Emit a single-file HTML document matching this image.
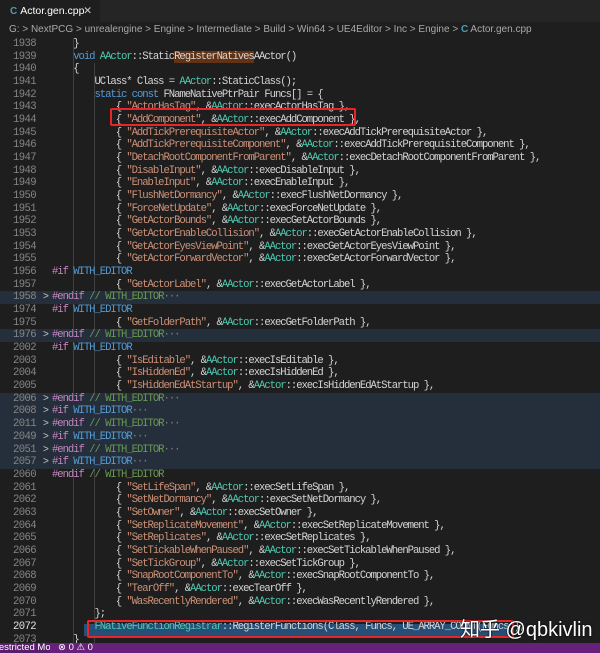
<!DOCTYPE html>
<html><head><meta charset="utf-8">
<style>
*{margin:0;padding:0;box-sizing:border-box}
html,body{width:600px;height:653px;overflow:hidden;background:#1e1e1e}
body{position:relative;font-family:"Liberation Sans",sans-serif}
#tabs{position:absolute;left:0;top:0;width:600px;height:22px;background:#252526}
#tab{position:absolute;left:0;top:0;width:100px;height:22px;background:#1e1e1e;color:#fff;font-size:10.5px;line-height:22px;padding-left:10px}
#tab .ic{color:#519aba;font-weight:bold;margin-right:3px;font-size:10px}
#tab .x{position:absolute;right:8px;color:#ccc}
#crumb{position:absolute;left:0;top:22px;width:600px;height:15px;background:#1e1e1e;color:#a9a9a9;font-size:10px;line-height:15px;padding-left:9px;white-space:nowrap}
#code{position:absolute;left:0;top:38px;width:600px}
.r{position:relative;height:12.68px;line-height:12.68px;font-family:"Liberation Mono",monospace;font-size:10.6px;letter-spacing:-1.05px;white-space:pre;color:#d4d4d4}
.r.fd{background:#252f3b}
.n{position:absolute;left:0;width:36px;text-align:right;color:#858585;letter-spacing:-0.6px}
.cur .n{color:#e0e0e0}
.a{position:absolute;left:43px;color:#c5c5c5;font-family:"Liberation Sans",sans-serif;font-size:10px;letter-spacing:0}
.t{position:absolute;left:52px}
.k{color:#569cd6}.ty{color:#4ec9b0}.s{color:#ce9178}.p{color:#c586c0}.m{color:#569cd6}.c{color:#6a9955}.f{color:#dcdcaa}.d{color:#808080}
.g{position:absolute;top:38px;width:1px;background:#404040}
.box{position:absolute;border:2px solid #e8262a;border-radius:2px}
#sel{position:absolute;left:84px;top:624px;width:425px;height:12px;background:#264f78}
#wm{position:absolute;left:460px;top:613px;color:#fff;font-size:20px;font-family:"Liberation Sans","Noto Sans CJK SC",sans-serif;text-shadow:0 0 2px #000}
#sb{position:absolute;left:0;top:643px;width:600px;height:10px;background:#68217a;color:#fff;font-size:9.5px;line-height:10px;white-space:nowrap}
#sb .l{display:inline-block;background:#5a1d6b;width:50px;overflow:hidden;text-indent:-8px;vertical-align:top}
</style></head><body>
<div id="tabs"><div id="tab"><span class="ic">C</span>Actor.gen.cpp<span class="x">✕</span></div></div>
<div id="crumb">G: &gt; NextPCG &gt; unrealengine &gt; Engine &gt; Intermediate &gt; Build &gt; Win64 &gt; UE4Editor &gt; Inc &gt; Engine &gt; <span style="color:#519aba;font-weight:bold">C</span> Actor.gen.cpp</div>
<div class="g" style="left:73px;height:605px"></div>
<div class="g" style="left:94px;height:580px;top:63px"></div>
<div id="sel"></div>
<div id="code">
<div class="r"><span class="n">1938</span><span class="t">    }</span></div>
<div class="r"><span class="n">1939</span><span class="t">    <span class="k">void</span> <span class="ty">AActor</span>::Static<span style="background:#613214">RegisterNatives</span>AActor()</span></div>
<div class="r"><span class="n">1940</span><span class="t">    {</span></div>
<div class="r"><span class="n">1941</span><span class="t">        UClass* Class = <span class="ty">AActor</span>::StaticClass();</span></div>
<div class="r"><span class="n">1942</span><span class="t">        <span class="k">static</span> <span class="k">const</span> FNameNativePtrPair Funcs[] = {</span></div>
<div class="r"><span class="n">1943</span><span class="t">            { <span class="s">"ActorHasTag"</span>, &amp;<span class="ty">AActor</span>::execActorHasTag },</span></div>
<div class="r"><span class="n">1944</span><span class="t">            { <span class="s">"AddComponent"</span>, &amp;<span class="ty">AActor</span>::execAddComponent },</span></div>
<div class="r"><span class="n">1945</span><span class="t">            { <span class="s">"AddTickPrerequisiteActor"</span>, &amp;<span class="ty">AActor</span>::execAddTickPrerequisiteActor },</span></div>
<div class="r"><span class="n">1946</span><span class="t">            { <span class="s">"AddTickPrerequisiteComponent"</span>, &amp;<span class="ty">AActor</span>::execAddTickPrerequisiteComponent },</span></div>
<div class="r"><span class="n">1947</span><span class="t">            { <span class="s">"DetachRootComponentFromParent"</span>, &amp;<span class="ty">AActor</span>::execDetachRootComponentFromParent },</span></div>
<div class="r"><span class="n">1948</span><span class="t">            { <span class="s">"DisableInput"</span>, &amp;<span class="ty">AActor</span>::execDisableInput },</span></div>
<div class="r"><span class="n">1949</span><span class="t">            { <span class="s">"EnableInput"</span>, &amp;<span class="ty">AActor</span>::execEnableInput },</span></div>
<div class="r"><span class="n">1950</span><span class="t">            { <span class="s">"FlushNetDormancy"</span>, &amp;<span class="ty">AActor</span>::execFlushNetDormancy },</span></div>
<div class="r"><span class="n">1951</span><span class="t">            { <span class="s">"ForceNetUpdate"</span>, &amp;<span class="ty">AActor</span>::execForceNetUpdate },</span></div>
<div class="r"><span class="n">1952</span><span class="t">            { <span class="s">"GetActorBounds"</span>, &amp;<span class="ty">AActor</span>::execGetActorBounds },</span></div>
<div class="r"><span class="n">1953</span><span class="t">            { <span class="s">"GetActorEnableCollision"</span>, &amp;<span class="ty">AActor</span>::execGetActorEnableCollision },</span></div>
<div class="r"><span class="n">1954</span><span class="t">            { <span class="s">"GetActorEyesViewPoint"</span>, &amp;<span class="ty">AActor</span>::execGetActorEyesViewPoint },</span></div>
<div class="r"><span class="n">1955</span><span class="t">            { <span class="s">"GetActorForwardVector"</span>, &amp;<span class="ty">AActor</span>::execGetActorForwardVector },</span></div>
<div class="r"><span class="n">1956</span><span class="t"><span class="p">#if</span> <span class="m">WITH_EDITOR</span></span></div>
<div class="r"><span class="n">1957</span><span class="t">            { <span class="s">"GetActorLabel"</span>, &amp;<span class="ty">AActor</span>::execGetActorLabel },</span></div>
<div class="r fd"><span class="n">1958</span><span class="a">&gt;</span><span class="t"><span class="p">#endif</span> <span class="c">// WITH_EDITOR</span><span class="d">···</span></span></div>
<div class="r"><span class="n">1974</span><span class="t"><span class="p">#if</span> <span class="m">WITH_EDITOR</span></span></div>
<div class="r"><span class="n">1975</span><span class="t">            { <span class="s">"GetFolderPath"</span>, &amp;<span class="ty">AActor</span>::execGetFolderPath },</span></div>
<div class="r fd"><span class="n">1976</span><span class="a">&gt;</span><span class="t"><span class="p">#endif</span> <span class="c">// WITH_EDITOR</span><span class="d">···</span></span></div>
<div class="r"><span class="n">2002</span><span class="t"><span class="p">#if</span> <span class="m">WITH_EDITOR</span></span></div>
<div class="r"><span class="n">2003</span><span class="t">            { <span class="s">"IsEditable"</span>, &amp;<span class="ty">AActor</span>::execIsEditable },</span></div>
<div class="r"><span class="n">2004</span><span class="t">            { <span class="s">"IsHiddenEd"</span>, &amp;<span class="ty">AActor</span>::execIsHiddenEd },</span></div>
<div class="r"><span class="n">2005</span><span class="t">            { <span class="s">"IsHiddenEdAtStartup"</span>, &amp;<span class="ty">AActor</span>::execIsHiddenEdAtStartup },</span></div>
<div class="r fd"><span class="n">2006</span><span class="a">&gt;</span><span class="t"><span class="p">#endif</span> <span class="c">// WITH_EDITOR</span><span class="d">···</span></span></div>
<div class="r fd"><span class="n">2008</span><span class="a">&gt;</span><span class="t"><span class="p">#if</span> <span class="m">WITH_EDITOR</span><span class="d">···</span></span></div>
<div class="r fd"><span class="n">2011</span><span class="a">&gt;</span><span class="t"><span class="p">#endif</span> <span class="c">// WITH_EDITOR</span><span class="d">···</span></span></div>
<div class="r fd"><span class="n">2049</span><span class="a">&gt;</span><span class="t"><span class="p">#if</span> <span class="m">WITH_EDITOR</span><span class="d">···</span></span></div>
<div class="r fd"><span class="n">2051</span><span class="a">&gt;</span><span class="t"><span class="p">#endif</span> <span class="c">// WITH_EDITOR</span><span class="d">···</span></span></div>
<div class="r fd"><span class="n">2057</span><span class="a">&gt;</span><span class="t"><span class="p">#if</span> <span class="m">WITH_EDITOR</span><span class="d">···</span></span></div>
<div class="r"><span class="n">2060</span><span class="t"><span class="p">#endif</span> <span class="c">// WITH_EDITOR</span></span></div>
<div class="r"><span class="n">2061</span><span class="t">            { <span class="s">"SetLifeSpan"</span>, &amp;<span class="ty">AActor</span>::execSetLifeSpan },</span></div>
<div class="r"><span class="n">2062</span><span class="t">            { <span class="s">"SetNetDormancy"</span>, &amp;<span class="ty">AActor</span>::execSetNetDormancy },</span></div>
<div class="r"><span class="n">2063</span><span class="t">            { <span class="s">"SetOwner"</span>, &amp;<span class="ty">AActor</span>::execSetOwner },</span></div>
<div class="r"><span class="n">2064</span><span class="t">            { <span class="s">"SetReplicateMovement"</span>, &amp;<span class="ty">AActor</span>::execSetReplicateMovement },</span></div>
<div class="r"><span class="n">2065</span><span class="t">            { <span class="s">"SetReplicates"</span>, &amp;<span class="ty">AActor</span>::execSetReplicates },</span></div>
<div class="r"><span class="n">2066</span><span class="t">            { <span class="s">"SetTickableWhenPaused"</span>, &amp;<span class="ty">AActor</span>::execSetTickableWhenPaused },</span></div>
<div class="r"><span class="n">2067</span><span class="t">            { <span class="s">"SetTickGroup"</span>, &amp;<span class="ty">AActor</span>::execSetTickGroup },</span></div>
<div class="r"><span class="n">2068</span><span class="t">            { <span class="s">"SnapRootComponentTo"</span>, &amp;<span class="ty">AActor</span>::execSnapRootComponentTo },</span></div>
<div class="r"><span class="n">2069</span><span class="t">            { <span class="s">"TearOff"</span>, &amp;<span class="ty">AActor</span>::execTearOff },</span></div>
<div class="r"><span class="n">2070</span><span class="t">            { <span class="s">"WasRecentlyRendered"</span>, &amp;<span class="ty">AActor</span>::execWasRecentlyRendered },</span></div>
<div class="r"><span class="n">2071</span><span class="t">        };</span></div>
<div class="r cur"><span class="n">2072</span><span class="t">        <span class="ty">FNativeFunctionRegistrar</span>::RegisterFunctions(Class, Funcs, UE_ARRAY_COUNT(Funcs));</span></div>
<div class="r"><span class="n">2073</span><span class="t">    }</span></div>
</div>
<div class="box" style="left:110px;top:108px;width:246px;height:18px"></div>
<div class="box" style="left:87px;top:620px;width:427px;height:18px"></div>
<div id="wm">知乎 @qbkivlin</div>
<div id="sb"><span class="l">Restricted Mode</span><span style="margin-left:8px">⊗ 0 ⚠ 0</span></div>
</body></html>
